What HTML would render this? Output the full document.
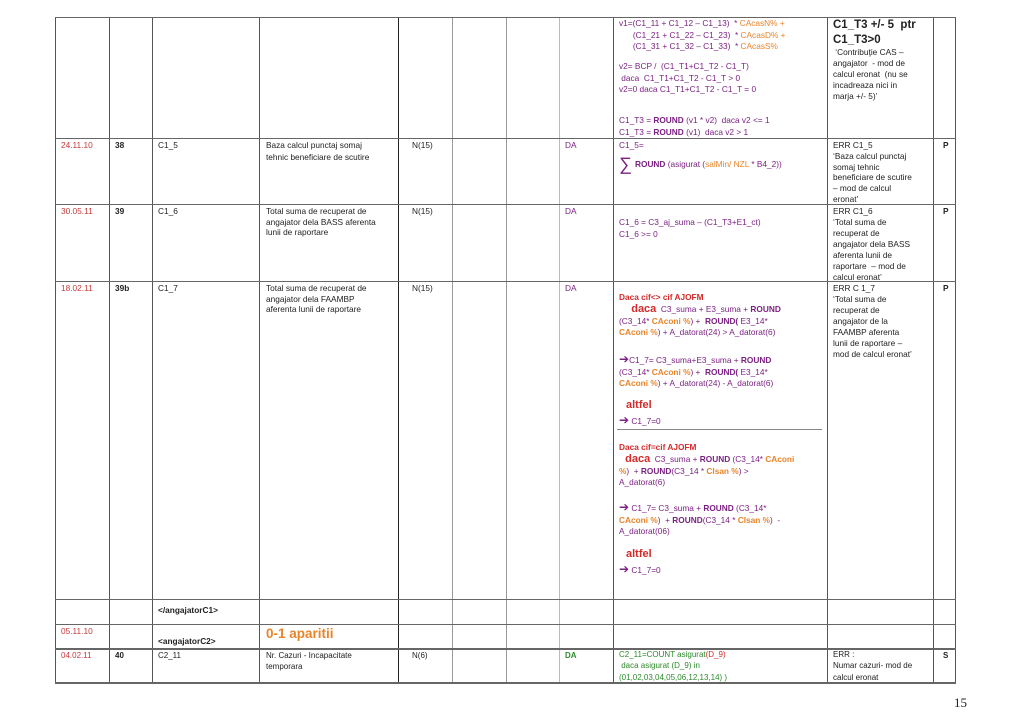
<!DOCTYPE html>
<html><head><meta charset="utf-8"><style>
body{margin:0;background:#fff;width:1030px;height:728px;position:relative;overflow:hidden;font-family:"Liberation Sans",sans-serif;font-size:8.3px;color:#222;}
.v{position:absolute;top:17px;height:665px;width:1px;background:#555;}
.h{position:absolute;left:55px;width:901px;height:1px;background:#666;}
.t{position:absolute;line-height:11.5px;white-space:nowrap;}
.p{color:#7b2183}.o{color:#e8842a}.r{color:#d42a2a}.g{color:#2e8b2e}.d{color:#c83a3a}
b{font-weight:bold}
.ar{font-size:12px}
.n{font-size:8px;line-height:11.3px}
</style></head><body>
<div class="v" style="left:55px"></div><div class="v" style="left:109px"></div><div class="v" style="left:152px"></div><div class="v" style="left:259px"></div><div class="v" style="left:398px;background:#222"></div><div class="v" style="left:452px;background:#999"></div><div class="v" style="left:506px;background:#999"></div><div class="v" style="left:559px;background:#bbb"></div><div class="v" style="left:613px"></div><div class="v" style="left:827px"></div><div class="v" style="left:933px"></div><div class="v" style="left:955px"></div>
<div class="h" style="top:17px"></div><div class="h" style="top:138px"></div><div class="h" style="top:204px"></div><div class="h" style="top:281px"></div><div class="h" style="top:599px"></div><div class="h" style="top:624px"></div><div class="h" style="top:648px;height:2px"></div><div class="h" style="top:682px;height:2px"></div>
<div style="position:absolute;left:617px;top:429px;width:205px;height:1px;background:#888"></div>

<div class="t p" style="left:619px;top:18px">v1=(C1_11 + C1_12 – C1_13) &nbsp;* <span class="o">CAcasN% +</span><br>&nbsp;&nbsp;&nbsp;&nbsp;&nbsp;&nbsp;(C1_21 + C1_22 – C1_23) &nbsp;* <span class="o">CAcasD% +</span><br>&nbsp;&nbsp;&nbsp;&nbsp;&nbsp;&nbsp;(C1_31 + C1_32 – C1_33) &nbsp;* <span class="o">CAcasS%</span></div>
<div class="t p" style="left:619px;top:61px">v2= BCP / &nbsp;(C1_T1+C1_T2 - C1_T)<br>&nbsp;daca &nbsp;C1_T1+C1_T2 - C1_T &gt; 0<br>v2=0 daca C1_T1+C1_T2 - C1_T = 0</div>
<div class="t p" style="left:619px;top:115px">C1_T3 = <b>ROUND</b> (v1 * v2) &nbsp;daca v2 &lt;= 1<br>C1_T3 = <b>ROUND</b> (v1) &nbsp;daca v2 &gt; 1</div>
<div class="t" style="left:833px;top:18px;font-size:11.5px;font-weight:bold;line-height:15px">C1_T3 +/- 5 &nbsp;ptr<br>C1_T3&gt;0</div>
<div class="t" style="left:833px;top:47px;line-height:11px">&nbsp;‘Contribuţie CAS –<br>angajator &nbsp;- mod de<br>calcul eronat &nbsp;(nu se<br>incadreaza nici in<br>marja +/- 5)’</div>

<div class="t d" style="left:61px;top:140px">24.11.10</div><div class="t" style="left:115px;top:140px"><b>38</b></div><div class="t" style="left:158px;top:140px">C1_5</div>
<div class="t" style="left:266px;top:140px">Baza calcul punctaj somaj<br>tehnic beneficiare de scutire</div>
<div class="t" style="left:412px;top:140px">N(15)</div><div class="t p" style="left:565px;top:140px">DA</div>
<div class="t p" style="left:619px;top:140px">C1_5=</div>
<div class="t p" style="left:619px;top:154px;font-size:18px;line-height:20px">∑</div>
<div class="t p" style="left:635px;top:159px"><b>ROUND</b> (asigurat (<span class="o">salMin/ NZL</span> * B4_2))</div>
<div class="t" style="left:833px;top:140px;line-height:10.8px">ERR C1_5<br>‘Baza calcul punctaj<br>somaj tehnic<br>beneficiare de scutire<br>– mod de calcul<br>eronat’</div>
<div class="t" style="left:943px;top:140px"><b>P</b></div>

<div class="t d" style="left:61px;top:206px">30.05.11</div><div class="t" style="left:115px;top:206px"><b>39</b></div><div class="t" style="left:158px;top:206px">C1_6</div>
<div class="t" style="left:266px;top:206px;line-height:10.5px">Total suma de recuperat de<br>angajator dela BASS aferenta<br>lunii de raportare</div>
<div class="t" style="left:412px;top:206px">N(15)</div><div class="t p" style="left:565px;top:206px">DA</div>
<div class="t p" style="left:619px;top:217px">C1_6 = C3_aj_suma – (C1_T3+E1_ct)<br>C1_6 &gt;= 0</div>
<div class="t" style="left:833px;top:206px;line-height:11px">ERR C1_6<br>‘Total suma de<br>recuperat de<br>angajator dela BASS<br>aferenta lunii de<br>raportare &nbsp;– mod de<br>calcul eronat’</div>
<div class="t" style="left:943px;top:206px"><b>P</b></div>

<div class="t d" style="left:61px;top:283px">18.02.11</div><div class="t" style="left:115px;top:283px"><b>39b</b></div><div class="t" style="left:158px;top:283px">C1_7</div>
<div class="t" style="left:266px;top:283px;line-height:10.5px">Total suma de recuperat de<br>angajator dela FAAMBP<br>aferenta lunii de raportare</div>
<div class="t" style="left:412px;top:283px">N(15)</div><div class="t p" style="left:565px;top:283px">DA</div>
<div class="t" style="left:833px;top:283px;line-height:11px">ERR C 1_7<br>‘Total suma de<br>recuperat de<br>angajator de la<br>FAAMBP aferenta<br>lunii de raportare –<br>mod de calcul eronat’</div>
<div class="t" style="left:943px;top:283px"><b>P</b></div>

<div class="t r" style="left:619px;top:292px"><b>Daca cif&lt;&gt; cif AJOFM</b></div>
<div class="t p" style="left:619px;top:304px"><span class="r" style="font-size:11px"><b>&nbsp;&nbsp;&nbsp;&nbsp;daca</b></span> &nbsp;C3_suma + E3_suma + <b>ROUND</b><br>(C3_14* <b class="o">CAconi %</b>) + &nbsp;<b>ROUND(</b> E3_14*<br><b class="o">CAconi %</b>) + A_datorat(24) &gt; A_datorat(6)</div>
<div class="t p" style="left:619px;top:354px"><span class="ar">➔</span>C1_7= C3_suma+E3_suma + <b>ROUND</b><br>(C3_14* <b class="o">CAconi %</b>) + &nbsp;<b>ROUND(</b> E3_14*<br><b class="o">CAconi %</b>) + A_datorat(24) - A_datorat(6)</div>
<div class="t r" style="left:626px;top:400px;font-size:11px"><b>altfel</b></div>
<div class="t p" style="left:619px;top:415px"><span class="ar">➔</span> C1_7=0</div>

<div class="t r" style="left:619px;top:442px"><b>Daca cif=cif AJOFM</b></div>
<div class="t p" style="left:619px;top:454px"><span class="r" style="font-size:11px"><b>&nbsp;&nbsp;daca</b></span> &nbsp;C3_suma + <b>ROUND</b> (C3_14* <b class="o">CAconi</b><br><b class="o">%</b>) &nbsp;+ <b>ROUND</b>(C3_14 * <b class="o">CIsan %</b>) &gt;<br>A_datorat(6)</div>
<div class="t p" style="left:619px;top:502px"><span class="ar">➔</span> C1_7= C3_suma + <b>ROUND</b> (C3_14*<br><b class="o">CAconi %</b>) &nbsp;+ <b>ROUND</b>(C3_14 * <b class="o">CIsan %</b>) &nbsp;-<br>A_datorat(06)</div>
<div class="t r" style="left:626px;top:549px;font-size:11px"><b>altfel</b></div>
<div class="t p" style="left:619px;top:564px"><span class="ar">➔</span> C1_7=0</div>

<div class="t" style="left:158px;top:605px"><b>&lt;/angajatorC1&gt;</b></div>
<div class="t d" style="left:61px;top:626px">05.11.10</div>
<div class="t o" style="left:266px;top:626px;font-size:13.5px;line-height:16px"><b>0-1 aparitii</b></div>
<div class="t" style="left:158px;top:636px"><b>&lt;angajatorC2&gt;</b></div>

<div class="t d n" style="left:61px;top:650px">04.02.11</div><div class="t n" style="left:115px;top:650px"><b>40</b></div><div class="t n" style="left:158px;top:650px">C2_11</div>
<div class="t n" style="left:266px;top:650px">Nr. Cazuri - Incapacitate<br>temporara</div>
<div class="t n" style="left:412px;top:650px">N(6)</div><div class="t g n" style="left:565px;top:650px"><b>DA</b></div>
<div class="t g n" style="left:619px;top:649px">C2_11=COUNT asigurat<span class="r">(D_9)</span><br>&nbsp;daca asigurat (D_9) in<br>(01,02,03,04,05,06,12,13,14) )</div>
<div class="t n" style="left:833px;top:649px">ERR :<br>Numar cazuri- mod de<br>calcul eronat</div>
<div class="t n" style="left:943px;top:650px"><b>S</b></div>

<div class="t" style="left:954px;top:697px;font-family:'Liberation Serif',serif;font-size:13px">15</div>
</body></html>
